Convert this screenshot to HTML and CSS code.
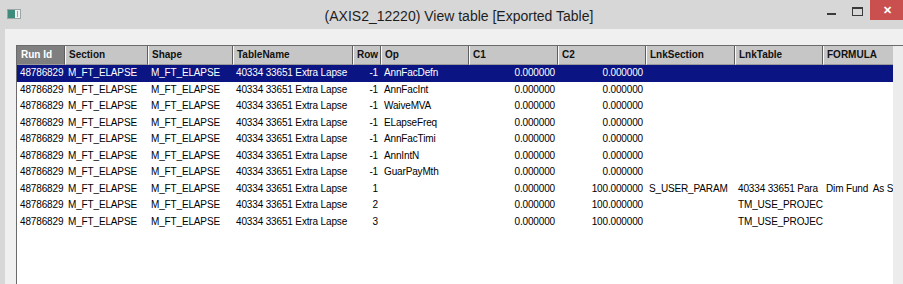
FILE: index.html
```html
<!DOCTYPE html>
<html lang="en">
<head>
  <meta charset="UTF-8" />
  <title>(AXIS2_12220) View table [Exported Table]</title>
  <link rel="stylesheet" href="styles.css">
</head>
<body>
  <div class="titlebar">
    <svg class="app-icon" width="14" height="10" viewBox="0 0 14 10">
      <rect x="0.5" y="0.5" width="13" height="9" fill="#eef2f2" stroke="#9aa6a6" />
      <rect x="1" y="1" width="7" height="8" fill="#3f8c7c" />
      <rect x="10" y="2" width="1" height="6" fill="#9aa6a6" />
    </svg>
    <div class="title">(AXIS2_12220) View table [Exported Table]</div>
    <div class="controls">
      <div class="btn btn-min"><span class="min-glyph"></span></div>
      <div class="btn btn-max"><span class="max-glyph"></span></div>
      <div class="btn btn-close">&#x2715;</div>
    </div>
  </div>

  <div class="client">
    <div class="listview">
      <div class="grid">
        <div class="row head">
          <div class="hcell sorted">Run Id</div>
          <div class="hcell">Section</div>
          <div class="hcell">Shape</div>
          <div class="hcell">TableName</div>
          <div class="hcell">Row</div>
          <div class="hcell">Op</div>
          <div class="hcell">C1</div>
          <div class="hcell">C2</div>
          <div class="hcell">LnkSection</div>
          <div class="hcell">LnkTable</div>
          <div class="hcell">FORMULA</div>
        </div>

        <div class="row selected">
          <div class="cell">48786829</div><div class="cell">M_FT_ELAPSE</div><div class="cell">M_FT_ELAPSE</div>
          <div class="cell">40334 33651 Extra Lapse</div><div class="cell num">-1</div><div class="cell">AnnFacDefn</div>
          <div class="cell num">0.000000</div><div class="cell num">0.000000</div><div class="cell"></div><div class="cell"></div><div class="cell"></div>
        </div>
        <div class="row">
          <div class="cell">48786829</div><div class="cell">M_FT_ELAPSE</div><div class="cell">M_FT_ELAPSE</div>
          <div class="cell">40334 33651 Extra Lapse</div><div class="cell num">-1</div><div class="cell">AnnFacInt</div>
          <div class="cell num">0.000000</div><div class="cell num">0.000000</div><div class="cell"></div><div class="cell"></div><div class="cell"></div>
        </div>
        <div class="row">
          <div class="cell">48786829</div><div class="cell">M_FT_ELAPSE</div><div class="cell">M_FT_ELAPSE</div>
          <div class="cell">40334 33651 Extra Lapse</div><div class="cell num">-1</div><div class="cell">WaiveMVA</div>
          <div class="cell num">0.000000</div><div class="cell num">0.000000</div><div class="cell"></div><div class="cell"></div><div class="cell"></div>
        </div>
        <div class="row">
          <div class="cell">48786829</div><div class="cell">M_FT_ELAPSE</div><div class="cell">M_FT_ELAPSE</div>
          <div class="cell">40334 33651 Extra Lapse</div><div class="cell num">-1</div><div class="cell">ELapseFreq</div>
          <div class="cell num">0.000000</div><div class="cell num">0.000000</div><div class="cell"></div><div class="cell"></div><div class="cell"></div>
        </div>
        <div class="row">
          <div class="cell">48786829</div><div class="cell">M_FT_ELAPSE</div><div class="cell">M_FT_ELAPSE</div>
          <div class="cell">40334 33651 Extra Lapse</div><div class="cell num">-1</div><div class="cell">AnnFacTimi</div>
          <div class="cell num">0.000000</div><div class="cell num">0.000000</div><div class="cell"></div><div class="cell"></div><div class="cell"></div>
        </div>
        <div class="row">
          <div class="cell">48786829</div><div class="cell">M_FT_ELAPSE</div><div class="cell">M_FT_ELAPSE</div>
          <div class="cell">40334 33651 Extra Lapse</div><div class="cell num">-1</div><div class="cell">AnnIntN</div>
          <div class="cell num">0.000000</div><div class="cell num">0.000000</div><div class="cell"></div><div class="cell"></div><div class="cell"></div>
        </div>
        <div class="row">
          <div class="cell">48786829</div><div class="cell">M_FT_ELAPSE</div><div class="cell">M_FT_ELAPSE</div>
          <div class="cell">40334 33651 Extra Lapse</div><div class="cell num">-1</div><div class="cell">GuarPayMth</div>
          <div class="cell num">0.000000</div><div class="cell num">0.000000</div><div class="cell"></div><div class="cell"></div><div class="cell"></div>
        </div>
        <div class="row">
          <div class="cell">48786829</div><div class="cell">M_FT_ELAPSE</div><div class="cell">M_FT_ELAPSE</div>
          <div class="cell">40334 33651 Extra Lapse</div><div class="cell num">1</div><div class="cell"></div>
          <div class="cell num">0.000000</div><div class="cell num">100.000000</div><div class="cell">S_USER_PARAM</div>
          <div class="cell">40334 33651 Para</div><div class="cell pre">Dim Fund  As S</div>
        </div>
        <div class="row">
          <div class="cell">48786829</div><div class="cell">M_FT_ELAPSE</div><div class="cell">M_FT_ELAPSE</div>
          <div class="cell">40334 33651 Extra Lapse</div><div class="cell num">2</div><div class="cell"></div>
          <div class="cell num">0.000000</div><div class="cell num">100.000000</div><div class="cell"></div>
          <div class="cell">TM_USE_PROJEC</div><div class="cell"></div>
        </div>
        <div class="row">
          <div class="cell">48786829</div><div class="cell">M_FT_ELAPSE</div><div class="cell">M_FT_ELAPSE</div>
          <div class="cell">40334 33651 Extra Lapse</div><div class="cell num">3</div><div class="cell"></div>
          <div class="cell num">0.000000</div><div class="cell num">100.000000</div><div class="cell"></div>
          <div class="cell">TM_USE_PROJEC</div><div class="cell"></div>
        </div>
      </div>
      <div class="vscroll"></div>
    </div>
  </div>
</body>
</html>
```

FILE: styles.css
```css
body {
  margin: 0;
  width: 903px;
  height: 284px;
  overflow: hidden;
  background: #d7d7d7;
  font-family: "Liberation Sans", Arial, sans-serif;
  color: #000;
}

/* window title bar */
.titlebar {
  height: 29px;
  display: flex;
  align-items: flex-start;
}

.app-icon {
  margin: 9px 0 0 7px;
  flex-shrink: 0;
}

.title {
  flex: 1;
  min-width: 0;
  padding-left: 79px;
  text-align: center;
  font-size: 14px;
  line-height: 32px;
  color: #1e1e1e;
  white-space: nowrap;
}

.controls {
  display: flex;
  flex-shrink: 0;
  height: 20px;
}

.btn {
  width: 26px;
  height: 20px;
  display: flex;
  align-items: center;
  justify-content: center;
}

.min-glyph {
  width: 9px;
  height: 2px;
  margin-top: 8px;
  background: #3a3a3a;
}

.max-glyph {
  width: 9px;
  height: 6px;
  margin-top: 2px;
  border: 1px solid #3a3a3a;
  border-top-width: 2px;
}

.btn-close {
  width: 33px;
  background: #c9504e;
  color: #fff;
  font-size: 11px;
  font-weight: bold;
  padding-left: 2px;
  box-sizing: border-box;
}

/* client area */
.client {
  margin-left: 5px;
  height: 255px;
  box-sizing: border-box;
  padding: 16px 0 0 11px;
  background: #f0f0f0;
}

.listview {
  display: flex;
  height: 100%;
  border-top: 1px solid #6b6b6b;
  border-left: 1px solid #6b6b6b;
  background: #fff;
}

.grid {
  width: 876px;
  flex-shrink: 0;
  overflow: hidden;
}

.vscroll {
  flex: 1;
  background: #ececec;
}

.row {
  display: grid;
  grid-template-columns: 48px 83px 85px 120px 28px 88px 89px 88px 89px 88px 88px;
  width: 894px;
  height: 16.5px;
  font-size: 10px;
  letter-spacing: -0.15px;
  line-height: 16.5px;
}

.row.head {
  height: 19px;
  line-height: 17px;
  letter-spacing: 0;
}

.hcell {
  box-sizing: border-box;
  background: #c6c6c6;
  border-left: 1px solid #fafafa;
  border-right: 1px solid #5e5e5e;
  border-bottom: 1px solid #9a9a9a;
  padding: 0 3px;
  font-size: 10px;
  font-weight: bold;
  color: #111;
  white-space: nowrap;
  overflow: hidden;
}

.hcell.sorted {
  background: #7f7f7f;
  color: #fff;
  border-left-color: #7f7f7f;
}

.cell {
  padding: 0 3px;
  white-space: nowrap;
  overflow: hidden;
}

.cell.num {
  text-align: right;
}

.cell.pre {
  white-space: pre;
}

.row.selected {
  background: #0a1482;
  color: #fff;
}
```
